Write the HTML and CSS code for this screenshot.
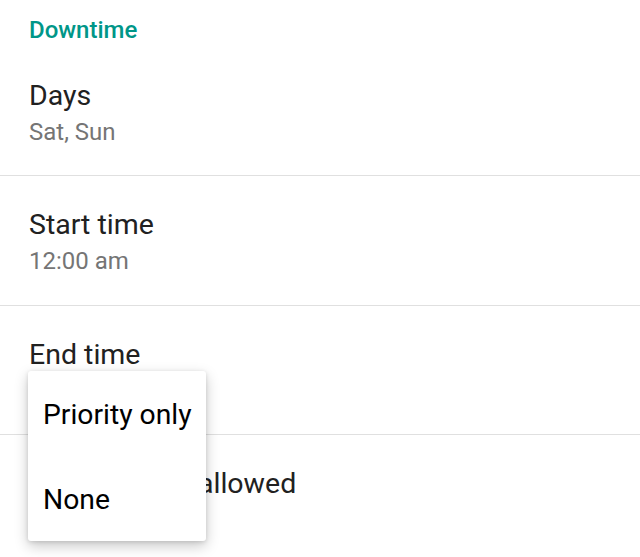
FILE: index.html
```html
<!DOCTYPE html>
<html>
<head>
<meta charset="utf-8">
<link rel="stylesheet" href="styles.css">
</head>
<body>
<div class="screen">
  <div class="category">Downtime</div>
  <div class="pref">
    <div class="title">Days</div>
    <div class="summary">Sat, Sun</div>
  </div>
  <div class="pref">
    <div class="title">Start time</div>
    <div class="summary">12:00 am</div>
  </div>
  <div class="pref">
    <div class="title">End time</div>
    <div class="summary">8:00 am</div>
  </div>
  <div class="pref last">
    <div class="title">Interruptions allowed</div>
    <div class="summary">Priority only</div>
  </div>
  <div class="menu">
    <div class="menu-item">Priority only</div>
    <div class="menu-item">None</div>
  </div>
</div>
</body>
</html>
```

FILE: styles.css
```css
html, body {
  margin: 0;
  padding: 0;
  background: #ffffff;
}
.screen {
  position: relative;
  width: 640px;
  height: 557px;
  overflow: hidden;
  font-family: Roboto, "Noto Sans", sans-serif;
}
.category {
  padding: 15px 0 0 29px;
  height: 31.5px;
  font-size: 24px;
  line-height: 30px;
  font-weight: 500;
  color: #009688;
}
.pref {
  box-sizing: border-box;
  padding: 33px 29px 0;
  height: 129.5px;
  border-bottom: 1px solid #e0e0e0;
}
.pref.last {
  border-bottom: none;
}
.title {
  font-size: 28.5px;
  line-height: 32px;
  color: #212121;
  white-space: nowrap;
}
.summary {
  margin-top: 4px;
  font-size: 24px;
  line-height: 32px;
  color: #757575;
}
.menu {
  position: absolute;
  left: 28px;
  top: 371px;
  width: 178px;
  height: 168px;
  padding-top: 2px;
  overflow: hidden;
  background: #ffffff;
  border-radius: 3px;
  box-shadow: 0 5px 14px rgba(0,0,0,0.22), 0 1px 4px rgba(0,0,0,0.12);
}
.menu-item {
  height: 85px;
  line-height: 84px;
  padding-left: 15px;
  font-size: 28.3px;
  color: #000000;
  white-space: nowrap;
}
```
